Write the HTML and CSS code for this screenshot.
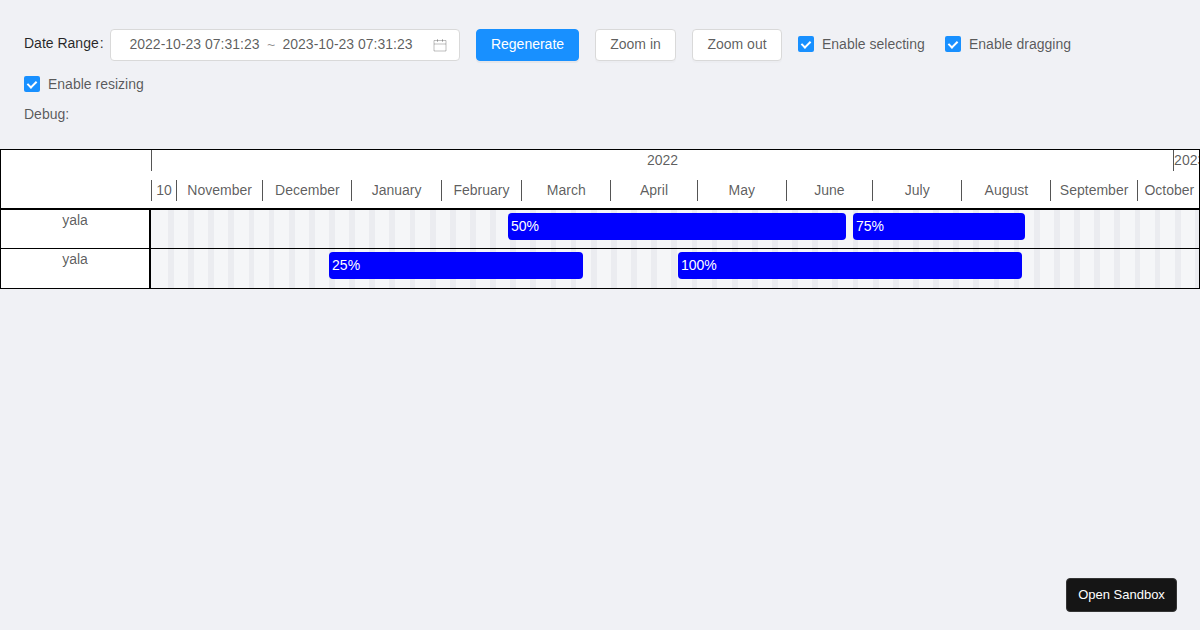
FILE: index.html
```html
<!DOCTYPE html>
<html lang="en">
<head>
  <meta charset="UTF-8">
  <meta name="viewport" content="width=device-width, initial-scale=1.0">
  <title>Gantt schedule</title>
  <link rel="stylesheet" href="styles.css">
</head>
<body>

  <form class="toolbar">
    <div class="field">
      <label class="field-label" for="rangeStart">Date Range</label>
      <div class="range-picker">
        <input type="text" id="rangeStart" value="2022-10-23 07:31:23">
        <span class="separator">~</span>
        <input type="text" id="rangeEnd" aria-label="End date" value="2023-10-23 07:31:23">
        <svg class="calendar-icon" viewBox="0 0 14 14" width="14" height="14" fill="none" stroke="currentColor"><path d="M1 2.500h12v10.500H1zM1 6h12M4.500 1v3M9.500 1v3"/></svg>
      </div>
    </div>
    <button type="button" class="btn btn-primary">Regenerate</button>
    <button type="button" class="btn btn-zoom-in">Zoom in</button>
    <button type="button" class="btn btn-zoom-out">Zoom out</button>
    <label class="check"><input type="checkbox" checked><span>Enable selecting</span></label>
    <label class="check"><input type="checkbox" checked><span>Enable dragging</span></label>
    <label class="check"><input type="checkbox" checked><span>Enable resizing</span></label>
  </form>
  <div class="debug">Debug:</div>

  <div class="gantt">
    <div class="gantt-header">
      <div class="corner"></div>
      <div class="timeline">
        <div class="scale" id="years"></div>
        <div class="scale" id="months"></div>
      </div>
    </div>
    <div id="rows"></div>
  </div>

  <a class="sandbox-link" href="#">Open Sandbox</a>

  <script src="gantt.js"></script>
</body>
</html>
```
FILE: styles.css
```css
:root {
  --primary: #1890ff;
  --bg: #f0f1f5;
  --text: rgba(0, 0, 0, 0.65);
  --border: #d9d9d9;
}
*, *::after { box-sizing: border-box; }
body {
  margin: 0;
  font-family: "Helvetica Neue", Helvetica, "Liberation Sans", Arial, sans-serif;
  font-size: 14px;
  line-height: 21px;
  color: var(--text);
  background: var(--bg);
}

/* toolbar */
.toolbar {
  display: flex;
  flex-wrap: wrap;
  column-gap: 16px;
  padding: 24px 24px 0;
}
.field { display: flex; }
.field-label {
  width: 86px;
  line-height: 38px;
  white-space: nowrap;
  color: rgba(0, 0, 0, 0.85);
}
.field-label::after {
  content: ":";
  margin-left: 1px;
}
.range-picker {
  display: flex;
  align-items: center;
  width: 350px;
  height: 32px;
  margin-top: 5px;
  padding: 0 12px;
  background: #fff;
  border: 1px solid var(--border);
  border-radius: 4px;
}
.range-picker input {
  width: 143px;
  padding: 0 0 2px;
  border: 0;
  outline: 0;
  background: transparent;
  color: inherit;
  font: inherit;
  text-align: center;
}
.separator {
  width: 10px;
  text-align: center;
  color: rgba(0, 0, 0, 0.45);
}
.calendar-icon {
  flex: none;
  margin-left: auto;
  color: rgba(0, 0, 0, 0.25);
}
.btn {
  height: 32px;
  margin-top: 5px;
  padding: 0 0 2px;
  font: inherit;
  color: var(--text);
  background: #fff;
  border: 1px solid var(--border);
  border-radius: 4px;
  box-shadow: 0 2px 0 rgba(0, 0, 0, 0.015);
  cursor: pointer;
}
.btn-primary {
  width: 103px;
  color: #fff;
  background: var(--primary);
  border-color: var(--primary);
  box-shadow: 0 2px 0 rgba(0, 0, 0, 0.045);
}
.btn-zoom-in { width: 81px; }
.btn-zoom-out { width: 90px; }
.check {
  display: flex;
  align-items: center;
  width: 131px;
  height: 40px;
  white-space: nowrap;
}
.check span { padding-left: 8px; }
.check input {
  appearance: none;
  display: flex;
  flex: none;
  align-items: center;
  justify-content: center;
  width: 16px;
  height: 16px;
  margin: 0;
  padding-bottom: 1px;
  background: var(--primary);
  border-radius: 2px;
}
.check input:checked::after {
  content: "";
  width: 6px;
  height: 9px;
  border: 2px solid #fff;
  border-top: 0;
  border-left: 0;
  transform: rotate(45deg);
}
.debug { padding: 0 24px; }

/* gantt */
.gantt {
  margin-top: 24px;
  background: #fff;
  border: 1px solid #000;
  overflow: hidden;
}
.gantt-header {
  display: flex;
  height: 60px;
  border-bottom: 2px solid #000;
}
.corner,
.row-name {
  flex: none;
  width: 150px;
}
.timeline {
  flex: 1;
  min-width: 0;
  margin-right: -2px;
}
.scale {
  display: flex;
  height: 30px;
}
.scale-cell {
  flex: 0 0 auto;
  height: 21px;
  border-left: 1px solid #555;
  text-align: center;
  white-space: nowrap;
}
.row {
  display: flex;
  height: 39px;
  border-bottom: 1px solid #000;
}
.row:last-child { border-bottom: 0; }
.row-name {
  border-right: 2px solid #000;
  text-align: center;
}
.track {
  position: relative;
  background: #f5f6f8;
}
.weekend {
  position: absolute;
  top: 0;
  bottom: 0;
  background: #ebecf0;
}
.bar {
  position: absolute;
  top: 3px;
  height: 27px;
  padding: 3px;
  color: #fff;
  background: #00f;
  border-radius: 4px;
}

.sandbox-link {
  position: fixed;
  right: 23px;
  bottom: 18px;
  width: 111px;
  padding: 6px 0;
  font-family: "Liberation Sans", Arial, sans-serif;
  font-size: 13px;
  line-height: 20px;
  text-align: center;
  color: #fff;
  text-decoration: none;
  background: #151515;
  border: 1px solid #343434;
  border-radius: 4px;
}
```
FILE: gantt.js
```js
const TOTAL_DAYS = 365;
const FIRST_SATURDAY = 5.9;

const years = [['2022', 355.3], ['2023', 9.7]];
const months = [
  ['10', 8.69], ['November', 30], ['December', 31], ['January', 31],
  ['February', 28], ['March', 31], ['April', 30], ['May', 31],
  ['June', 30], ['July', 31], ['August', 31], ['September', 30],
  ['October', 22.31]
];

// start and length are in days from the start of the range
const rows = [
  { name: 'yala', bars: [
    { label: '50%', start: 124.1, days: 117.5 },
    { label: '75%', start: 244, days: 59.8 }
  ] },
  { name: 'yala', bars: [
    { label: '25%', start: 61.9, days: 88.3 },
    { label: '100%', start: 183.2, days: 119.6 }
  ] }
];

const percent = days => (days / TOTAL_DAYS * 100) + '%';

function add(parent, className, text) {
  const el = document.createElement('div');
  el.className = className;
  if (text) el.textContent = text;
  parent.appendChild(el);
  return el;
}

function drawScale(id, cells) {
  const scale = document.getElementById(id);
  cells.forEach(([text, days]) => {
    add(scale, 'scale-cell', text).style.width = percent(days);
  });
}

function place(el, start, days) {
  el.style.left = percent(start);
  el.style.width = percent(days);
}

drawScale('years', years);
drawScale('months', months);

rows.forEach(({ name, bars }) => {
  const row = add(document.getElementById('rows'), 'row');
  add(row, 'row-name', name);
  const track = add(row, 'timeline track');
  for (let day = FIRST_SATURDAY; day < TOTAL_DAYS; day += 7) {
    place(add(track, 'weekend'), day, 2);
  }
  bars.forEach(bar => place(add(track, 'bar', bar.label), bar.start, bar.days));
});
```
